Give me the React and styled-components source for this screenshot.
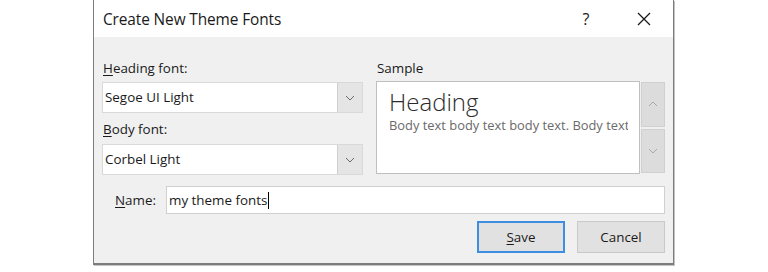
import React from "react";
import styled, { createGlobalStyle } from "styled-components";

const Global = createGlobalStyle`
  html, body { margin: 0; padding: 0; background: #ffffff; }
  body { font-family: "Open Sans", "Noto Sans", sans-serif; color: #000; }
`;

const Page = styled.div`
  width: 768px;
  height: 272px;
  overflow: hidden;
  padding-left: 93px;
  box-sizing: border-box;
`;

const Dialog = styled.div`
  width: 581px;
  height: 265px;
  box-sizing: border-box;
  border: 1px solid #7c7c7c;
  border-top: none;
  border-bottom-width: 2px;
  box-shadow: 1px 1px 0 #c4c4c4;
  background: #f0f0f0;
  display: flex;
  flex-direction: column;
`;

const TitleBar = styled.div`
  height: 37px;
  background: #ffffff;
  display: flex;
  align-items: center;
  padding-left: 9px;
  padding-top: 1px;
  box-sizing: border-box;
`;

const Title = styled.div`
  flex: 1;
  font-size: 15.4px;
  color: #1a1a1a;
  letter-spacing: -0.1px;
`;

const TitleBtn = styled.div`
  width: 58px;
  height: 36px;
  display: flex;
  align-items: center;
  justify-content: center;
  font-size: 16px;
  color: #1a1a1a;
`;

const Body = styled.div`
  flex: 1;
  padding: 22px 8px 0 8px;
  display: flex;
  flex-direction: column;
`;

const Top = styled.div`
  display: grid;
  grid-template-columns: 261px 289px;
  column-gap: 13px;
`;

const Col = styled.div`
  display: flex;
  flex-direction: column;
`;

const Label = styled.div`
  height: ${(p) => p.$h || 23}px;
  font-size: 13.4px;
  color: #1a1a1a;
  line-height: 18px;
  padding-left: ${(p) => p.$indent || 1}px;
  padding-top: ${(p) => p.$pt || 0}px;
  box-sizing: border-box;
`;

const U = styled.span`
  text-decoration: underline;
  text-underline-offset: 2px;
  text-decoration-thickness: 1px;
`;

const Combo = styled.div`
  height: 31px;
  display: flex;
  background: #ffffff;
  border: 1px solid #d9d9d9;
  box-sizing: border-box;
`;

const ComboText = styled.div`
  flex: 1;
  font-size: 13.4px;
  color: #1a1a1a;
  display: flex;
  align-items: center;
  padding-left: 2px;
  padding-bottom: 1px;
`;

const ComboBtn = styled.div`
  width: 24px;
  background: #e5e5e5;
  border-left: 1px solid #cfcfcf;
  display: flex;
  align-items: center;
  justify-content: center;
`;

const SampleRow = styled.div`
  display: flex;
  height: 93px;
`;

const SampleBox = styled.div`
  width: 264px;
  box-sizing: border-box;
  background: #ffffff;
  border: 1px solid #bfbfbf;
  padding: 5px 0 0 12px;
  overflow: hidden;
  white-space: nowrap;
`;

const SampleHeading = styled.div`
  font-size: 24px;
  font-weight: 300;
  color: #2b2b2b;
  line-height: 30px;
`;

const SampleText = styled.div`
  font-size: 12.9px;
  color: #6a6a6a;
  line-height: 17px;
  width: 239px;
  overflow: hidden;
`;

const Scroll = styled.div`
  width: 24px;
  margin-left: 1px;
  display: flex;
  flex-direction: column;
  gap: 2px;
  padding: 1px 0;
  box-sizing: border-box;
`;

const ScrollBtn = styled.div`
  flex: 1;
  background: #dcdcdc;
  border: 1px solid #d0d0d0;
  display: flex;
  align-items: center;
  justify-content: center;
`;

const NameRow = styled.div`
  display: flex;
  align-items: center;
  margin-top: 11px;
  height: 28px;
`;

const NameLabel = styled.div`
  width: 64px;
  padding-left: 13px;
  box-sizing: border-box;
  font-size: 13.4px;
  color: #1a1a1a;
`;

const NameInput = styled.div`
  flex: 1;
  height: 28px;
  background: #ffffff;
  border: 1px solid #d0d0d0;
  box-sizing: border-box;
  display: flex;
  align-items: center;
  padding-left: 2px;
  font-size: 13.4px;
  color: #1a1a1a;
`;

const Caret = styled.span`
  display: inline-block;
  width: 1px;
  height: 17px;
  background: #000;
  margin-left: 1px;
`;

const Buttons = styled.div`
  display: flex;
  justify-content: flex-end;
  gap: 12px;
  margin-top: 7px;
`;

const Button = styled.div`
  width: 88px;
  height: 32px;
  box-sizing: border-box;
  background: #e1e1e1;
  border: ${(p) => (p.$default ? "2px solid #3d8ee0" : "1px solid #c9c9c9")};
  display: flex;
  align-items: center;
  justify-content: center;
  font-size: 13.4px;
  color: #1a1a1a;
  padding-bottom: 1px;
`;

const Chevron = ({ up, color = "#6b6b6b" }) => (
  <svg width="10" height="6" viewBox="0 0 10 6">
    <polyline
      points={up ? "1,5 5,1 9,5" : "1,1 5,5 9,1"}
      fill="none"
      stroke={color}
      strokeWidth="1"
    />
  </svg>
);

const CloseIcon = () => (
  <svg width="14" height="14" viewBox="0 0 14 14">
    <path d="M1 1 L13 13 M13 1 L1 13" stroke="#1a1a1a" strokeWidth="1.3" />
  </svg>
);

export default function App() {
  return (
    <Page>
      <Global />
      <Dialog>
        <TitleBar>
          <Title>Create New Theme Fonts</Title>
          <TitleBtn>?</TitleBtn>
          <TitleBtn>
            <CloseIcon />
          </TitleBtn>
        </TitleBar>
        <Body>
          <Top>
            <Col>
              <Label>
                <U>H</U>eading font:
              </Label>
              <Combo>
                <ComboText>Segoe UI Light</ComboText>
                <ComboBtn>
                  <Chevron />
                </ComboBtn>
              </Combo>
              <Label $h={31} $pt={7}>
                <U>B</U>ody font:
              </Label>
              <Combo>
                <ComboText>Corbel Light</ComboText>
                <ComboBtn>
                  <Chevron />
                </ComboBtn>
              </Combo>
            </Col>
            <Col>
              <Label $h={22}>Sample</Label>
              <SampleRow>
                <SampleBox>
                  <SampleHeading>Heading</SampleHeading>
                  <SampleText>Body text body text body text. Body text body text.</SampleText>
                </SampleBox>
                <Scroll>
                  <ScrollBtn>
                    <Chevron up color="#a8a8a8" />
                  </ScrollBtn>
                  <ScrollBtn>
                    <Chevron color="#a8a8a8" />
                  </ScrollBtn>
                </Scroll>
              </SampleRow>
            </Col>
          </Top>
          <NameRow>
            <NameLabel>
              <U>N</U>ame:
            </NameLabel>
            <NameInput>
              my theme fonts
              <Caret />
            </NameInput>
          </NameRow>
          <Buttons>
            <Button $default>
              <span>
                <U>S</U>ave
              </span>
            </Button>
            <Button>Cancel</Button>
          </Buttons>
        </Body>
      </Dialog>
    </Page>
  );
}
